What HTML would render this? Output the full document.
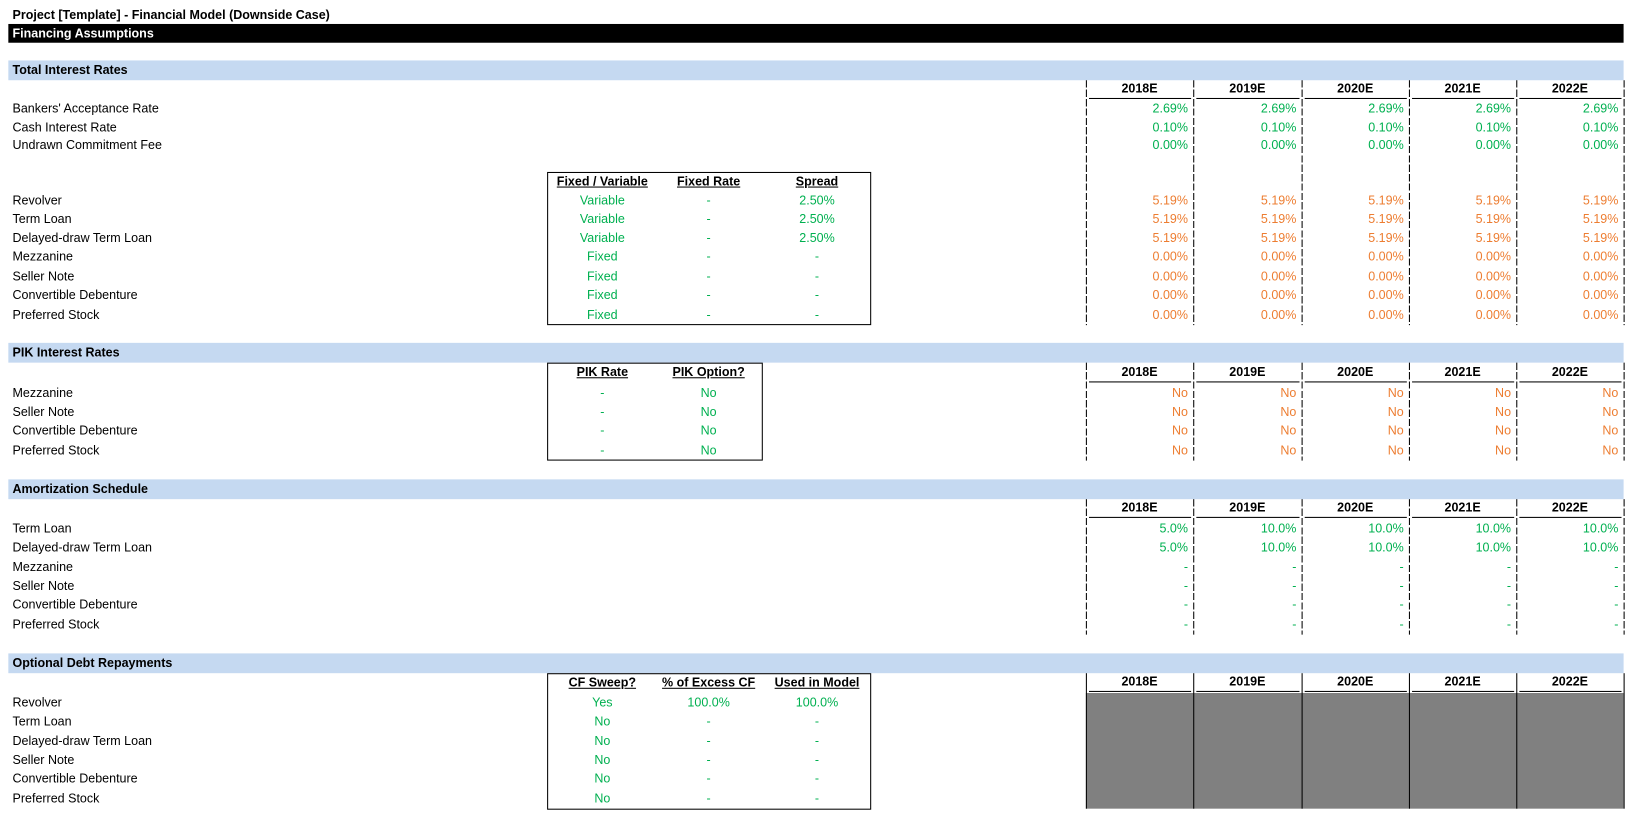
<!DOCTYPE html>
<html><head><meta charset="utf-8"><style>
body{margin:0;background:#fff;width:1634px;height:822px;overflow:hidden}
#c{position:absolute;left:0;top:0;width:1568px;height:789px;transform:scale(1.0421);transform-origin:0 0;font-family:"Liberation Sans",Arial,sans-serif;font-size:12px;color:#000}
#c div{position:absolute;white-space:nowrap;line-height:18px;height:18px}
.b{font-weight:bold}
.band{left:8px;width:1550px;background:#c5d9f1;height:19px!important}
.band span{position:absolute;left:4px;top:0;font-weight:bold}
.v{width:98px;text-align:right}
.g{color:#00b050}.o{color:#ed7d31}
.y{font-weight:bold;text-align:center}
.c{text-align:center;width:120px}
.h{font-weight:bold;text-decoration:underline}
.dl{width:1px!important;background:repeating-linear-gradient(to bottom,#000 0 7px,transparent 7px 9px)}
.sl{width:1px!important;background:#000}
.ul{height:1px!important;background:#000}
.box{border:1px solid #000;height:auto!important}
</style></head><body><div id="c">
<div class="b" style="left:12px;top:5px">Project [Template] - Financial Model (Downside Case)</div>
<div style="left:8px;top:23px;width:1550px;background:#000;height:18px"></div>
<div class="b" style="left:12px;top:23px;color:#fff">Financing Assumptions</div>

<!-- Section 1 -->
<div class="band" style="top:58px"><span>Total Interest Rates</span></div>
<div class="dl" style="left:1042px;top:77px;height:235px"></div><div class="dl" style="left:1145px;top:77px;height:235px"></div><div class="dl" style="left:1249px;top:77px;height:235px"></div><div class="dl" style="left:1352px;top:77px;height:235px"></div><div class="dl" style="left:1455px;top:77px;height:235px"></div><div class="dl" style="left:1558px;top:77px;height:235px"></div>
<div class="y" style="left:1042px;width:103px;top:76px">2018E</div><div class="y" style="left:1145px;width:104px;top:76px">2019E</div><div class="y" style="left:1249px;width:103px;top:76px">2020E</div><div class="y" style="left:1352px;width:103px;top:76px">2021E</div><div class="y" style="left:1455px;width:103px;top:76px">2022E</div>
<div class="ul" style="left:1045px;width:98px;top:94px"></div><div class="ul" style="left:1148px;width:99px;top:94px"></div><div class="ul" style="left:1252px;width:98px;top:94px"></div><div class="ul" style="left:1355px;width:98px;top:94px"></div><div class="ul" style="left:1458px;width:98px;top:94px"></div>
<div style="left:12px;top:95px">Bankers' Acceptance Rate</div>
<div style="left:12px;top:113px">Cash Interest Rate</div>
<div style="left:12px;top:130px">Undrawn Commitment Fee</div>
<div class="v g" style="left:1042px;top:95px">2.69%</div><div class="v g" style="left:1146px;top:95px">2.69%</div><div class="v g" style="left:1249px;top:95px">2.69%</div><div class="v g" style="left:1352px;top:95px">2.69%</div><div class="v g" style="left:1455px;top:95px">2.69%</div>
<div class="v g" style="left:1042px;top:113px">0.10%</div><div class="v g" style="left:1146px;top:113px">0.10%</div><div class="v g" style="left:1249px;top:113px">0.10%</div><div class="v g" style="left:1352px;top:113px">0.10%</div><div class="v g" style="left:1455px;top:113px">0.10%</div>
<div class="v g" style="left:1042px;top:130px">0.00%</div><div class="v g" style="left:1146px;top:130px">0.00%</div><div class="v g" style="left:1249px;top:130px">0.00%</div><div class="v g" style="left:1352px;top:130px">0.00%</div><div class="v g" style="left:1455px;top:130px">0.00%</div>

<div class="box" style="left:525px;top:165px;width:309px;height:145px!important"></div>
<div class="c h" style="left:518px;top:165px">Fixed / Variable</div><div class="c h" style="left:620px;top:165px">Fixed Rate</div><div class="c h" style="left:724px;top:165px">Spread</div>

<div style="left:12px;top:183px">Revolver</div>
<div style="left:12px;top:201px">Term Loan</div>
<div style="left:12px;top:219px">Delayed-draw Term Loan</div>
<div style="left:12px;top:237px">Mezzanine</div>
<div style="left:12px;top:256px">Seller Note</div>
<div style="left:12px;top:274px">Convertible Debenture</div>
<div style="left:12px;top:293px">Preferred Stock</div>

<div class="c g" style="left:518px;top:183px">Variable</div><div class="c g" style="left:620px;top:183px">-</div><div class="c g" style="left:724px;top:183px">2.50%</div>
<div class="c g" style="left:518px;top:201px">Variable</div><div class="c g" style="left:620px;top:201px">-</div><div class="c g" style="left:724px;top:201px">2.50%</div>
<div class="c g" style="left:518px;top:219px">Variable</div><div class="c g" style="left:620px;top:219px">-</div><div class="c g" style="left:724px;top:219px">2.50%</div>
<div class="c g" style="left:518px;top:237px">Fixed</div><div class="c g" style="left:620px;top:237px">-</div><div class="c g" style="left:724px;top:237px">-</div>
<div class="c g" style="left:518px;top:256px">Fixed</div><div class="c g" style="left:620px;top:256px">-</div><div class="c g" style="left:724px;top:256px">-</div>
<div class="c g" style="left:518px;top:274px">Fixed</div><div class="c g" style="left:620px;top:274px">-</div><div class="c g" style="left:724px;top:274px">-</div>
<div class="c g" style="left:518px;top:293px">Fixed</div><div class="c g" style="left:620px;top:293px">-</div><div class="c g" style="left:724px;top:293px">-</div>

<div class="v o" style="left:1042px;top:183px">5.19%</div><div class="v o" style="left:1146px;top:183px">5.19%</div><div class="v o" style="left:1249px;top:183px">5.19%</div><div class="v o" style="left:1352px;top:183px">5.19%</div><div class="v o" style="left:1455px;top:183px">5.19%</div>
<div class="v o" style="left:1042px;top:201px">5.19%</div><div class="v o" style="left:1146px;top:201px">5.19%</div><div class="v o" style="left:1249px;top:201px">5.19%</div><div class="v o" style="left:1352px;top:201px">5.19%</div><div class="v o" style="left:1455px;top:201px">5.19%</div>
<div class="v o" style="left:1042px;top:219px">5.19%</div><div class="v o" style="left:1146px;top:219px">5.19%</div><div class="v o" style="left:1249px;top:219px">5.19%</div><div class="v o" style="left:1352px;top:219px">5.19%</div><div class="v o" style="left:1455px;top:219px">5.19%</div>
<div class="v o" style="left:1042px;top:237px">0.00%</div><div class="v o" style="left:1146px;top:237px">0.00%</div><div class="v o" style="left:1249px;top:237px">0.00%</div><div class="v o" style="left:1352px;top:237px">0.00%</div><div class="v o" style="left:1455px;top:237px">0.00%</div>
<div class="v o" style="left:1042px;top:256px">0.00%</div><div class="v o" style="left:1146px;top:256px">0.00%</div><div class="v o" style="left:1249px;top:256px">0.00%</div><div class="v o" style="left:1352px;top:256px">0.00%</div><div class="v o" style="left:1455px;top:256px">0.00%</div>
<div class="v o" style="left:1042px;top:274px">0.00%</div><div class="v o" style="left:1146px;top:274px">0.00%</div><div class="v o" style="left:1249px;top:274px">0.00%</div><div class="v o" style="left:1352px;top:274px">0.00%</div><div class="v o" style="left:1455px;top:274px">0.00%</div>
<div class="v o" style="left:1042px;top:293px">0.00%</div><div class="v o" style="left:1146px;top:293px">0.00%</div><div class="v o" style="left:1249px;top:293px">0.00%</div><div class="v o" style="left:1352px;top:293px">0.00%</div><div class="v o" style="left:1455px;top:293px">0.00%</div>

<!-- Section 2 -->
<div class="band" style="top:329px"><span>PIK Interest Rates</span></div>
<div class="dl" style="left:1042px;top:348px;height:94px"></div><div class="dl" style="left:1145px;top:348px;height:94px"></div><div class="dl" style="left:1249px;top:348px;height:94px"></div><div class="dl" style="left:1352px;top:348px;height:94px"></div><div class="dl" style="left:1455px;top:348px;height:94px"></div><div class="dl" style="left:1558px;top:348px;height:94px"></div>
<div class="y" style="left:1042px;width:103px;top:348px">2018E</div><div class="y" style="left:1145px;width:104px;top:348px">2019E</div><div class="y" style="left:1249px;width:103px;top:348px">2020E</div><div class="y" style="left:1352px;width:103px;top:348px">2021E</div><div class="y" style="left:1455px;width:103px;top:348px">2022E</div>
<div class="ul" style="left:1045px;width:98px;top:366px"></div><div class="ul" style="left:1148px;width:99px;top:366px"></div><div class="ul" style="left:1252px;width:98px;top:366px"></div><div class="ul" style="left:1355px;width:98px;top:366px"></div><div class="ul" style="left:1458px;width:98px;top:366px"></div>
<div class="box" style="left:525px;top:348px;width:205px;height:92px!important"></div>
<div class="c h" style="left:518px;top:348px">PIK Rate</div><div class="c h" style="left:620px;top:348px">PIK Option?</div>
<div style="left:12px;top:368px">Mezzanine</div>
<div style="left:12px;top:386px">Seller Note</div>
<div style="left:12px;top:404px">Convertible Debenture</div>
<div style="left:12px;top:423px">Preferred Stock</div>
<div class="c g" style="left:518px;top:368px">-</div><div class="c g" style="left:620px;top:368px">No</div>
<div class="c g" style="left:518px;top:386px">-</div><div class="c g" style="left:620px;top:386px">No</div>
<div class="c g" style="left:518px;top:404px">-</div><div class="c g" style="left:620px;top:404px">No</div>
<div class="c g" style="left:518px;top:423px">-</div><div class="c g" style="left:620px;top:423px">No</div>
<div class="v o" style="left:1042px;top:368px">No</div><div class="v o" style="left:1146px;top:368px">No</div><div class="v o" style="left:1249px;top:368px">No</div><div class="v o" style="left:1352px;top:368px">No</div><div class="v o" style="left:1455px;top:368px">No</div>
<div class="v o" style="left:1042px;top:386px">No</div><div class="v o" style="left:1146px;top:386px">No</div><div class="v o" style="left:1249px;top:386px">No</div><div class="v o" style="left:1352px;top:386px">No</div><div class="v o" style="left:1455px;top:386px">No</div>
<div class="v o" style="left:1042px;top:404px">No</div><div class="v o" style="left:1146px;top:404px">No</div><div class="v o" style="left:1249px;top:404px">No</div><div class="v o" style="left:1352px;top:404px">No</div><div class="v o" style="left:1455px;top:404px">No</div>
<div class="v o" style="left:1042px;top:423px">No</div><div class="v o" style="left:1146px;top:423px">No</div><div class="v o" style="left:1249px;top:423px">No</div><div class="v o" style="left:1352px;top:423px">No</div><div class="v o" style="left:1455px;top:423px">No</div>

<!-- Section 3 -->
<div class="band" style="top:460px"><span>Amortization Schedule</span></div>
<div class="dl" style="left:1042px;top:479px;height:130px"></div><div class="dl" style="left:1145px;top:479px;height:130px"></div><div class="dl" style="left:1249px;top:479px;height:130px"></div><div class="dl" style="left:1352px;top:479px;height:130px"></div><div class="dl" style="left:1455px;top:479px;height:130px"></div><div class="dl" style="left:1558px;top:479px;height:130px"></div>
<div class="y" style="left:1042px;width:103px;top:478px">2018E</div><div class="y" style="left:1145px;width:104px;top:478px">2019E</div><div class="y" style="left:1249px;width:103px;top:478px">2020E</div><div class="y" style="left:1352px;width:103px;top:478px">2021E</div><div class="y" style="left:1455px;width:103px;top:478px">2022E</div>
<div class="ul" style="left:1045px;width:98px;top:496px"></div><div class="ul" style="left:1148px;width:99px;top:496px"></div><div class="ul" style="left:1252px;width:98px;top:496px"></div><div class="ul" style="left:1355px;width:98px;top:496px"></div><div class="ul" style="left:1458px;width:98px;top:496px"></div>
<div style="left:12px;top:498px">Term Loan</div>
<div style="left:12px;top:516px">Delayed-draw Term Loan</div>
<div style="left:12px;top:535px">Mezzanine</div>
<div style="left:12px;top:553px">Seller Note</div>
<div style="left:12px;top:571px">Convertible Debenture</div>
<div style="left:12px;top:590px">Preferred Stock</div>
<div class="v g" style="left:1042px;top:498px">5.0%</div><div class="v g" style="left:1146px;top:498px">10.0%</div><div class="v g" style="left:1249px;top:498px">10.0%</div><div class="v g" style="left:1352px;top:498px">10.0%</div><div class="v g" style="left:1455px;top:498px">10.0%</div>
<div class="v g" style="left:1042px;top:516px">5.0%</div><div class="v g" style="left:1146px;top:516px">10.0%</div><div class="v g" style="left:1249px;top:516px">10.0%</div><div class="v g" style="left:1352px;top:516px">10.0%</div><div class="v g" style="left:1455px;top:516px">10.0%</div>
<div class="v g" style="left:1042px;top:535px">-</div><div class="v g" style="left:1146px;top:535px">-</div><div class="v g" style="left:1249px;top:535px">-</div><div class="v g" style="left:1352px;top:535px">-</div><div class="v g" style="left:1455px;top:535px">-</div>
<div class="v g" style="left:1042px;top:553px">-</div><div class="v g" style="left:1146px;top:553px">-</div><div class="v g" style="left:1249px;top:553px">-</div><div class="v g" style="left:1352px;top:553px">-</div><div class="v g" style="left:1455px;top:553px">-</div>
<div class="v g" style="left:1042px;top:571px">-</div><div class="v g" style="left:1146px;top:571px">-</div><div class="v g" style="left:1249px;top:571px">-</div><div class="v g" style="left:1352px;top:571px">-</div><div class="v g" style="left:1455px;top:571px">-</div>
<div class="v g" style="left:1042px;top:590px">-</div><div class="v g" style="left:1146px;top:590px">-</div><div class="v g" style="left:1249px;top:590px">-</div><div class="v g" style="left:1352px;top:590px">-</div><div class="v g" style="left:1455px;top:590px">-</div>

<!-- Section 4 -->
<div class="band" style="top:627px"><span>Optional Debt Repayments</span></div>
<div style="left:1042px;top:665px;width:516px;height:111px;background:#808080"></div>
<div class="sl" style="left:1042px;top:646px;height:130px"></div><div class="sl" style="left:1145px;top:646px;height:130px"></div><div class="sl" style="left:1249px;top:646px;height:130px"></div><div class="sl" style="left:1352px;top:646px;height:130px"></div><div class="sl" style="left:1455px;top:646px;height:130px"></div><div class="sl" style="left:1558px;top:646px;height:130px"></div>
<div class="y" style="left:1042px;width:103px;top:645px">2018E</div><div class="y" style="left:1145px;width:104px;top:645px">2019E</div><div class="y" style="left:1249px;width:103px;top:645px">2020E</div><div class="y" style="left:1352px;width:103px;top:645px">2021E</div><div class="y" style="left:1455px;width:103px;top:645px">2022E</div>
<div class="ul" style="left:1045px;width:98px;top:663px"></div><div class="ul" style="left:1148px;width:99px;top:663px"></div><div class="ul" style="left:1252px;width:98px;top:663px"></div><div class="ul" style="left:1355px;width:98px;top:663px"></div><div class="ul" style="left:1458px;width:98px;top:663px"></div>
<div class="box" style="left:525px;top:646px;width:309px;height:129px!important"></div>
<div class="c h" style="left:518px;top:646px">CF Sweep?</div><div class="c h" style="left:620px;top:646px">% of Excess CF</div><div class="c h" style="left:724px;top:646px">Used in Model</div>
<div style="left:12px;top:665px">Revolver</div>
<div style="left:12px;top:683px">Term Loan</div>
<div style="left:12px;top:702px">Delayed-draw Term Loan</div>
<div style="left:12px;top:720px">Seller Note</div>
<div style="left:12px;top:738px">Convertible Debenture</div>
<div style="left:12px;top:757px">Preferred Stock</div>
<div class="c g" style="left:518px;top:665px">Yes</div><div class="c g" style="left:620px;top:665px">100.0%</div><div class="c g" style="left:724px;top:665px">100.0%</div>
<div class="c g" style="left:518px;top:683px">No</div><div class="c g" style="left:620px;top:683px">-</div><div class="c g" style="left:724px;top:683px">-</div>
<div class="c g" style="left:518px;top:702px">No</div><div class="c g" style="left:620px;top:702px">-</div><div class="c g" style="left:724px;top:702px">-</div>
<div class="c g" style="left:518px;top:720px">No</div><div class="c g" style="left:620px;top:720px">-</div><div class="c g" style="left:724px;top:720px">-</div>
<div class="c g" style="left:518px;top:738px">No</div><div class="c g" style="left:620px;top:738px">-</div><div class="c g" style="left:724px;top:738px">-</div>
<div class="c g" style="left:518px;top:757px">No</div><div class="c g" style="left:620px;top:757px">-</div><div class="c g" style="left:724px;top:757px">-</div>
</div></body></html>
